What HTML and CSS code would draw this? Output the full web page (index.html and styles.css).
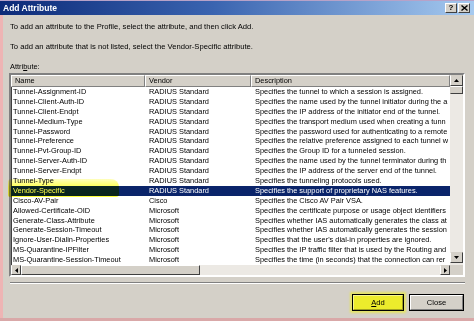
FILE: index.html
```html
<!DOCTYPE html>
<html>
<head>
<meta charset="utf-8">
<link rel="stylesheet" href="styles.css">
</head>
<body>
<div class="window">
  <div class="titlebar">
    <span class="title">Add Attribute</span>
    <div class="tbtns">
      <span class="tbtn">?</span>
      <span class="tbtn x">
        <svg width="7" height="6" viewBox="0 0 7 6"><path d="M0.5 0.5 L6.5 5.5 M6.5 0.5 L0.5 5.5" stroke="#000" stroke-width="1.4"/></svg>
      </span>
    </div>
  </div>
  <div class="body">
    <p class="line">To add an attribute to the Profile, select the attribute, and then click Add.</p>
    <p class="line">To add an attribute that is not listed, select the Vendor-Specific attribute.</p>
    <p class="line label">Attri<u>b</u>ute:</p>
    <div class="listbox">
      <div class="main">
        <div class="header">
          <div class="hcell c1">Name</div>
          <div class="hcell c2">Vendor</div>
          <div class="hcell c3">Description</div>
        </div>
        <div class="rows">
          <div class="row"><span class="c1">Tunnel-Assignment-ID</span><span class="c2">RADIUS Standard</span><span class="c3">Specifies the tunnel to which a session is assigned.</span></div>
          <div class="row"><span class="c1">Tunnel-Client-Auth-ID</span><span class="c2">RADIUS Standard</span><span class="c3">Specifies the name used by the tunnel initiator during the a</span></div>
          <div class="row"><span class="c1">Tunnel-Client-Endpt</span><span class="c2">RADIUS Standard</span><span class="c3">Specifies the IP address of the initiator end of the tunnel.</span></div>
          <div class="row"><span class="c1">Tunnel-Medium-Type</span><span class="c2">RADIUS Standard</span><span class="c3">Specifies the transport medium used when creating a tunn</span></div>
          <div class="row"><span class="c1">Tunnel-Password</span><span class="c2">RADIUS Standard</span><span class="c3">Specifies the password used for authenticating to a remote</span></div>
          <div class="row"><span class="c1">Tunnel-Preference</span><span class="c2">RADIUS Standard</span><span class="c3">Specifies the relative preference assigned to each tunnel w</span></div>
          <div class="row"><span class="c1">Tunnel-Pvt-Group-ID</span><span class="c2">RADIUS Standard</span><span class="c3">Specifies the Group ID for a tunneled session.</span></div>
          <div class="row"><span class="c1">Tunnel-Server-Auth-ID</span><span class="c2">RADIUS Standard</span><span class="c3">Specifies the name used by the tunnel terminator during th</span></div>
          <div class="row"><span class="c1">Tunnel-Server-Endpt</span><span class="c2">RADIUS Standard</span><span class="c3">Specifies the IP address of the server end of the tunnel.</span></div>
          <div class="row"><span class="c1">Tunnel-Type</span><span class="c2">RADIUS Standard</span><span class="c3">Specifies the tunneling protocols used.</span></div>
          <div class="row sel"><span class="c1">Vendor-Specific</span><span class="c2">RADIUS Standard</span><span class="c3">Specifies the support of proprietary NAS features.</span></div>
          <div class="row"><span class="c1">Cisco-AV-Pair</span><span class="c2">Cisco</span><span class="c3">Specifies the Cisco AV Pair VSA.</span></div>
          <div class="row"><span class="c1">Allowed-Certificate-OID</span><span class="c2">Microsoft</span><span class="c3">Specifies the certificate purpose or usage object identifiers</span></div>
          <div class="row"><span class="c1">Generate-Class-Attribute</span><span class="c2">Microsoft</span><span class="c3">Specifies whether IAS automatically generates the class at</span></div>
          <div class="row"><span class="c1">Generate-Session-Timeout</span><span class="c2">Microsoft</span><span class="c3">Specifies whether IAS automatically generates the session</span></div>
          <div class="row"><span class="c1">Ignore-User-Dialin-Properties</span><span class="c2">Microsoft</span><span class="c3">Specifies that the user's dial-in properties are ignored.</span></div>
          <div class="row"><span class="c1">MS-Quarantine-IPFilter</span><span class="c2">Microsoft</span><span class="c3">Specifies the IP traffic filter that is used by the Routing and</span></div>
          <div class="row"><span class="c1">MS-Quarantine-Session-Timeout</span><span class="c2">Microsoft</span><span class="c3">Specifies the time (in seconds) that the connection can rer</span></div>
        </div>
      </div>
      <div class="vscroll">
        <div class="sbtn up"><svg width="5" height="3" viewBox="0 0 5 3"><path d="M2.5 0 L5 3 L0 3 Z" fill="#000"/></svg></div>
        <div class="vthumb"></div>
        <div class="track"></div>
        <div class="sbtn down"><svg width="5" height="3" viewBox="0 0 5 3"><path d="M0 0 L5 0 L2.5 3 Z" fill="#000"/></svg></div>
      </div>
      <div class="hscroll">
        <div class="sbtn left"><svg width="3" height="5" viewBox="0 0 3 5"><path d="M3 0 L3 5 L0 2.5 Z" fill="#000"/></svg></div>
        <div class="hthumb"></div>
        <div class="track"></div>
        <div class="sbtn right"><svg width="3" height="5" viewBox="0 0 3 5"><path d="M0 0 L0 5 L3 2.5 Z" fill="#000"/></svg></div>
      </div>
      <div class="corner"></div>
    </div>
    <div class="sep"></div>
    <div class="buttons">
      <div class="btn add"><span><u>A</u>dd</span></div>
      <div class="btn close"><span>Close</span></div>
    </div>
  </div>
  <div class="marker"></div>
</div>
</body>
</html>
```

FILE: styles.css
```css
* { box-sizing: border-box; }
html, body { margin: 0; padding: 0; }
body {
  width: 474px;
  height: 321px;
  overflow: hidden;
  background: #d4d0c8;
  font-family: "Liberation Sans", Arial, sans-serif;
  font-size: 7.4px;
  color: #000;
}
.window {
  position: relative;
  width: 474px;
  height: 321px;
  display: flex;
  flex-direction: column;
  background: #d4d0c8;
  border-bottom: 3px solid #d9a8a8;
}
.titlebar {
  height: 15px;
  flex: none;
  display: flex;
  align-items: center;
  justify-content: space-between;
  padding: 0 4px 0 3px;
  background: linear-gradient(to right, #0c2a78 0%, #3a64b0 45%, #a6caf0 100%);
  border-top: 1px solid #b7a2c8;
}
.title {
  color: #fff;
  font-weight: bold;
  font-size: 8.5px;
  font-family: "Liberation Sans", Arial, sans-serif;
}
.tbtns { display: flex; gap: 1px; }
.tbtn {
  width: 12px;
  height: 10px;
  background: #d4d0c8;
  border: 1px solid;
  border-color: #fff #404040 #404040 #fff;
  font-weight: bold;
  font-size: 8px;
  line-height: 8px;
  display: flex;
  align-items: center;
  justify-content: center;
}
.body {
  flex: 1;
  display: flex;
  flex-direction: column;
  border-left: 3px solid #eeb4b4;
  padding: 7px 9px 0 6px;
}
.line {
  margin: 0 0 10px 0;
  padding-left: 1px;
  line-height: 10px;
  height: 10px;
  font-size: 7.65px;
  white-space: nowrap;
}
.label { margin-bottom: 1px; font-size: 7.4px; }
.listbox {
  height: 204px;
  flex: none;
  display: grid;
  grid-template-columns: 1fr 13px;
  grid-template-rows: 1fr 10px;
  background: #fff;
  border: 2px solid;
  border-color: #808080 #fff #fff #808080;
  box-shadow: inset 1px 1px 0 #404040;
}
.main {
  grid-column: 1;
  grid-row: 1;
  overflow: hidden;
  min-width: 0;
}
.header {
  display: grid;
  grid-template-columns: 134px 106px 1fr;
  height: 12px;
}
.hcell {
  background: #d4d0c8;
  border-top: 1px solid #fff;
  border-left: 1px solid #fff;
  border-bottom: 1px solid #808080;
  border-right: 1px solid #808080;
  line-height: 10px;
  padding-left: 3px;
}
.rows { display: flex; flex-direction: column; }
.row {
  display: grid;
  grid-template-columns: 134px 106px 1fr;
  height: 9.9px;
  line-height: 9.9px;
  white-space: nowrap;
}
.row span { overflow: hidden; }
.row .c1 { padding-left: 2px; }
.row .c2 { padding-left: 4px; }
.row .c3 { padding-left: 4px; }
.row.sel { background: #0a246a; color: #fff; }
.vscroll {
  grid-column: 2;
  grid-row: 1;
  display: flex;
  flex-direction: column;
  background: #ece9e4;
}
.sbtn {
  flex: none;
  background: #d4d0c8;
  border: 1px solid;
  border-color: #d4d0c8 #404040 #404040 #fff;
  display: flex;
  align-items: center;
  justify-content: center;
}
.vscroll .sbtn { height: 11px; }
.vscroll .sbtn.down { margin-bottom: 2px; }
.vthumb {
  height: 8px;
  flex: none;
  background: #d4d0c8;
  border: 1px solid;
  border-color: #fff #404040 #404040 #d4d0c8;
}
.track { flex: 1; background: #ece9e4; }
.hscroll {
  grid-column: 1;
  grid-row: 2;
  display: flex;
  background: #ece9e4;
}
.hscroll .sbtn { width: 10px; }
.hthumb {
  width: 179px;
  flex: none;
  background: #d4d0c8;
  border: 1px solid;
  border-color: #fff #404040 #404040 #fff;
}
.corner { grid-column: 2; grid-row: 2; background: #d4d0c8; }
.sep {
  margin-top: 5px;
  margin-left: 1px;
  height: 2px;
  border-top: 1px solid #808080;
  border-bottom: 1px solid #fff;
}
.buttons {
  margin-top: 10px;
  display: flex;
  justify-content: flex-end;
  gap: 5px;
  padding-right: 1px;
}
.btn {
  height: 17px;
  border: 1px solid #000;
  display: flex;
  align-items: center;
  justify-content: center;
  font-size: 7.6px;
}
.btn span {
  display: flex;
  align-items: center;
  justify-content: center;
  width: 100%;
  height: 100%;
  border: 1px solid;
  border-color: #fff #808080 #808080 #fff;
}
.btn.add {
  width: 52px;
  background: #ecec2c;
  box-shadow: 0 0 2px 2px rgba(236, 236, 60, 0.7);
}
.btn.add span { border-color: #f6f690 #a0a020 #a0a020 #f6f690; }
.btn.close { width: 55px; background: #d4d0c8; }
.marker {
  position: absolute;
  left: 8px;
  top: 179px;
  width: 111px;
  height: 18px;
  border-radius: 3px 8px 3px 2px;
  background: linear-gradient(to bottom, rgba(255, 255, 70, 0.35) 0%, rgba(255, 255, 60, 0.9) 45%, rgba(255, 255, 60, 1) 100%);
  mix-blend-mode: multiply;
  pointer-events: none;
}
```
